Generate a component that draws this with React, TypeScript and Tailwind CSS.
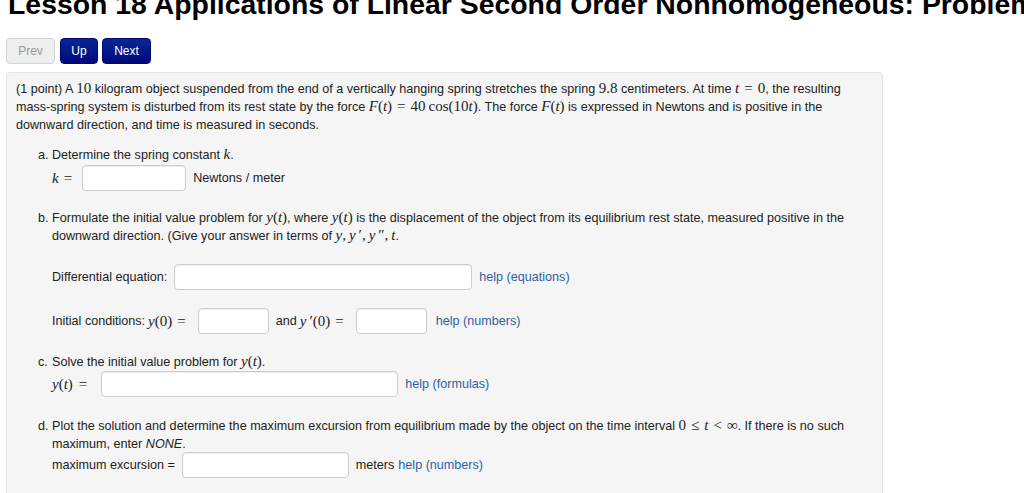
import type { ReactNode } from 'react';

const math = "font-['Liberation_Serif',serif] text-[15px] leading-none";

function V({ children }: { children: ReactNode }) {
  return <span className={`${math} italic`}>{children}</span>;
}

function N({ children }: { children: ReactNode }) {
  return <span className={math}>{children}</span>;
}

function Eq({ className }: { className?: string }) {
  return <span className={`${math} ${className ?? 'mx-[5px]'}`}>=</span>;
}

function Field({ width, className }: { width: string; className?: string }) {
  return (
    <input
      type="text"
      className={`${width} ${className ?? 'mx-[7px]'} h-[26px] rounded-[4px] border border-[#cccccc] bg-white shadow-[inset_0_1px_1px_rgba(0,0,0,0.075)] outline-none`}
    />
  );
}

function Help({ children }: { children: ReactNode }) {
  return <a className="cursor-pointer text-[#2e5fa6]">{children}</a>;
}

function Part({ label, className, children }: { label: string; className?: string; children: ReactNode }) {
  return (
    <div className={`flex pl-[22px] ${className ?? ''}`}>
      <span className="w-[14px] shrink-0">{label}</span>
      <div className="min-w-0 flex-1">{children}</div>
    </div>
  );
}

export default function App() {
  return (
    <div className="h-[493px] w-full overflow-hidden bg-white font-['Liberation_Sans',Arial,sans-serif] text-[#222]">
      <h1 className="-mt-[13px] whitespace-nowrap pl-[8px] text-[28.4px] font-bold leading-[34px] text-black">
        Lesson 18 Applications of Linear Second Order Nonhomogeneous: Problem 2
      </h1>

      <div className="mt-[17px] flex gap-[4px] pl-[6px] text-[12px]">
        <button className="mr-[1px] h-[26px] w-[49px] rounded-[4px] border border-[#d4d4d4] bg-[#eeeeee] text-[#999999]">
          Prev
        </button>
        <button className="h-[26px] w-[38px] rounded-[4px] border border-[#000a6e] bg-gradient-to-b from-[#0b2596] to-[#00087e] text-white">
          Up
        </button>
        <button className="h-[26px] w-[49px] rounded-[4px] border border-[#000a6e] bg-gradient-to-b from-[#0b2596] to-[#00087e] text-white">
          Next
        </button>
      </div>

      <div className="ml-[6px] mt-[8px] w-[877px] rounded-[4px] border border-[#e3e3e3] bg-[#f5f5f5] px-[9px] pb-[24px] pt-[7px] text-[12.6px] leading-[18px]">
        <p>
          (1 point) A <N>10</N> kilogram object suspended from the end of a vertically hanging spring stretches the
          spring <N>9.8</N> centimeters. At time <V>t</V>
          <Eq />
          <N>0</N>, the resulting mass-spring system is disturbed from its rest state by the force{' '}
          <V>F</V>
          <N>(</N>
          <V>t</V>
          <N>)</N>
          <Eq />
          <N>40&thinsp;cos(10</N>
          <V>t</V>
          <N>)</N>. The force <V>F</V>
          <N>(</N>
          <V>t</V>
          <N>)</N> is expressed in Newtons and is positive in the downward direction, and time is measured in seconds.
        </p>

        <Part label="a." className="mt-[12px]">
          <div>
            Determine the spring constant <V>k</V>.
          </div>
          <div className="mt-[1px] flex items-center">
            <V>k</V>
            <Eq className="ml-[5px] mr-[3px]" />
            <Field width="w-[104px]" />
            <span>Newtons / meter</span>
          </div>
        </Part>

        <Part label="b." className="mt-[18px]">
          <div>
            Formulate the initial value problem for <V>y</V>
            <N>(</N>
            <V>t</V>
            <N>)</N>, where <V>y</V>
            <N>(</N>
            <V>t</V>
            <N>)</N> is the displacement of the object from its equilibrium rest state, measured positive in the
            downward direction. (Give your answer in terms of <V>y</V>
            <N>,&thinsp;</N>
            <V>y</V>
            <N>&thinsp;′,&thinsp;</N>
            <V>y</V>
            <N>&thinsp;″,&thinsp;</N>
            <V>t</V>.
          </div>
          <div className="mt-[19px] flex items-center">
            <span>Differential equation:</span>
            <Field width="w-[298px]" />
            <Help>help (equations)</Help>
          </div>
          <div className="mt-[18px] flex items-center">
            <span className="mr-[3px]">Initial conditions:</span>
            <V>y</V>
            <N>(0)</N>
            <Eq />
            <Field width="w-[71px]" />
            <span className="mr-[3px]">and</span>
            <V>y</V>
            <N>&thinsp;′(0)</N>
            <Eq />
            <Field width="w-[71px]" className="ml-[7px] mr-[9px]" />
            <Help>help (numbers)</Help>
          </div>
        </Part>

        <Part label="c." className="mt-[19px]">
          <div>
            Solve the initial value problem for <V>y</V>
            <N>(</N>
            <V>t</V>
            <N>)</N>.
          </div>
          <div className="flex items-center">
            <V>y</V>
            <N>(</N>
            <V>t</V>
            <N>)</N>
            <Eq className="ml-[6px] mr-[7px]" />
            <Field width="w-[297px]" />
            <Help>help (formulas)</Help>
          </div>
        </Part>

        <Part label="d." className="mt-[20px]">
          <div>
            Plot the solution and determine the maximum excursion from equilibrium made by the object on the time
            interval <N>0</N>
            <span className={`${math} mx-[5px]`}>≤</span>
            <V>t</V>
            <span className={`${math} mx-[5px]`}>&lt;</span>
            <N>∞</N>. If there is no such maximum, enter <i>NONE</i>.
          </div>
          <div className="-mt-[1px] flex items-center">
            <span>maximum excursion =</span>
            <Field width="w-[167px]" />
            <span className="mr-[4px]">meters</span>
            <Help>help (numbers)</Help>
          </div>
        </Part>
      </div>
    </div>
  );
}
